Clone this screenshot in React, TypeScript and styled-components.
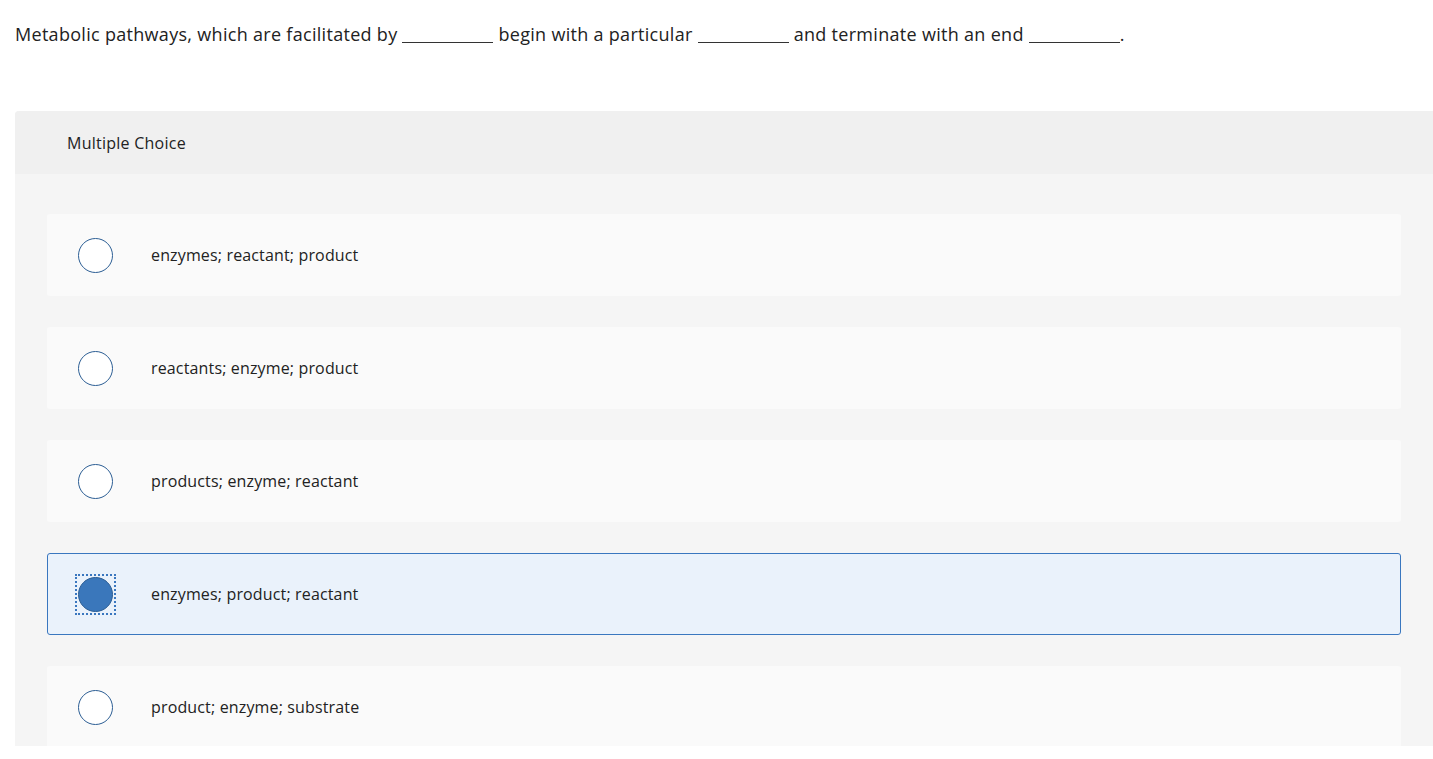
import React, { useState } from 'react';
import styled, { createGlobalStyle } from 'styled-components';

const GlobalStyle = createGlobalStyle`
  html, body {
    margin: 0;
    padding: 0;
    background: #fff;
    font-family: "Open Sans", Lato, Arial, sans-serif;
    color: #222;
  }
`;

const options = [
  'enzymes; reactant; product',
  'reactants; enzyme; product',
  'products; enzyme; reactant',
  'enzymes; product; reactant',
  'product; enzyme; substrate',
];

const Page = styled.div`
  height: 759px;
  overflow: hidden;
  padding-left: 15px;
  box-sizing: border-box;
`;

const Question = styled.p`
  margin: 0;
  padding-top: 22px;
  height: 111px;
  box-sizing: border-box;
  font-size: 18px;
  line-height: 24px;
  letter-spacing: 0.3px;
  color: #222;
`;

const Blank = styled.span`
  display: inline-block;
  width: 91px;
  margin-bottom: -2px;
  border-bottom: 1px solid #333;
`;

const Panel = styled.section`
  height: 635px;
  background: #f5f5f5;
  border-top-left-radius: 4px;
  overflow: hidden;
`;

const PanelHeader = styled.header`
  height: 63px;
  background: #f0f0f0;
  display: flex;
  align-items: center;
  padding-left: 52px;
  font-size: 16px;
  letter-spacing: 0.25px;
  color: #222;
`;

const OptionList = styled.div`
  display: flex;
  flex-direction: column;
  gap: 31px;
  padding: 40px 32px 0 32px;
`;

const Option = styled.label<{ $selected: boolean }>`
  display: flex;
  align-items: center;
  gap: 35px;
  height: 82px;
  flex-shrink: 0;
  box-sizing: border-box;
  padding-left: 27px;
  border-radius: 3px;
  border: 1px solid ${p => (p.$selected ? '#3a77bf' : 'transparent')};
  background: ${p => (p.$selected ? '#eaf2fb' : '#fafafa')};
  cursor: pointer;
  font-size: 16px;
  letter-spacing: 0.15px;
  color: #222;
`;

const RadioWrap = styled.span<{ $focused: boolean }>`
  width: 41px;
  height: 41px;
  box-sizing: border-box;
  display: flex;
  align-items: center;
  justify-content: center;
  border: 2px dotted ${p => (p.$focused ? '#3a77bf' : 'transparent')};
`;

const Radio = styled.span<{ $checked: boolean }>`
  width: 35px;
  height: 35px;
  box-sizing: border-box;
  border-radius: 50%;
  border: 1.5px solid #2c5e94;
  background: ${p => (p.$checked ? '#3a77bb' : '#fff')};
`;

export default function App() {
  const [selected, setSelected] = useState(3);

  return (
    <Page>
      <GlobalStyle />
      <Question>
        Metabolic pathways, which are facilitated by <Blank /> begin with a particular <Blank /> and
        terminate with an end <Blank />.
      </Question>
      <Panel>
        <PanelHeader>Multiple Choice</PanelHeader>
        <OptionList>
          {options.map((text, i) => (
            <Option key={text} $selected={selected === i} onClick={() => setSelected(i)}>
              <RadioWrap $focused={selected === i}>
                <Radio $checked={selected === i} />
              </RadioWrap>
              {text}
            </Option>
          ))}
        </OptionList>
      </Panel>
    </Page>
  );
}
